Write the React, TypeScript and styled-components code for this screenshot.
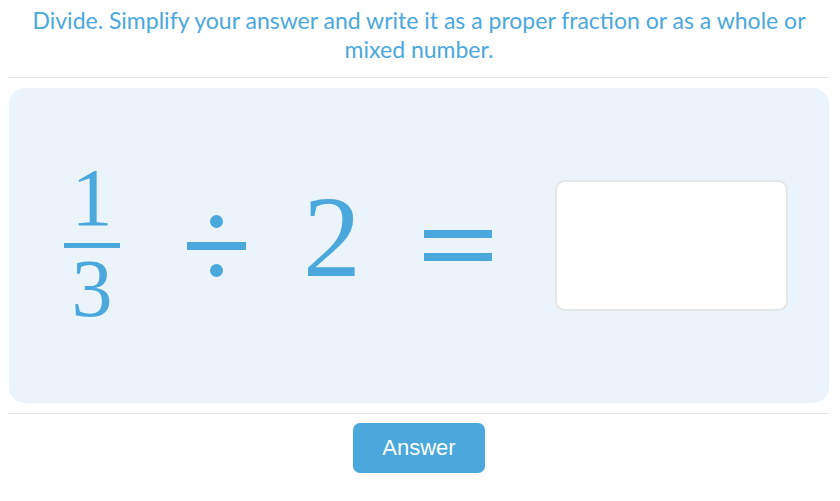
import styled, { createGlobalStyle } from 'styled-components'

const GlobalStyle = createGlobalStyle`
  html, body {
    margin: 0;
    padding: 0;
    background: #ffffff;
  }
  * {
    box-sizing: border-box;
  }
`

const blue = '#4aa8dc'

const Page = styled.div`
  width: 840px;
  padding: 0 11px 0 9px;
`

const Prompt = styled.h2`
  margin: 0;
  padding: 6px 20px 13px;
  font-family: Lato, 'Open Sans', sans-serif;
  font-weight: 400;
  font-size: 23px;
  line-height: 29px;
  color: ${blue};
  text-align: center;
`

const Rule = styled.hr`
  margin: 0;
  border: none;
  height: 1px;
  background: #e6e6e6;
`

const Panel = styled.div`
  margin: 10px 0;
  height: 315px;
  border-radius: 16px;
  background: #ebf4fa;
  display: flex;
  align-items: center;
  padding-left: 55px;
  color: ${blue};
  font-family: 'Liberation Serif', 'Times New Roman', serif;
`

const Fraction = styled.div`
  display: inline-flex;
  flex-direction: column;
  align-items: center;
  width: 56px;
  font-size: 82px;
  line-height: 1;
  position: relative;
  top: -2px;
`

const Numerator = styled.span`
  display: block;
  margin-bottom: 4px;
`

const Denominator = styled.span`
  display: block;
  margin-top: 0;
`

const Bar = styled.span`
  display: block;
  width: 56px;
  height: 5px;
  background: ${blue};
`

const Operator = styled.span<{ $gap: number }>`
  position: relative;
  display: inline-flex;
  flex-direction: column;
  align-items: center;
  justify-content: center;
  margin-left: ${(p) => p.$gap}px;
`

const OpText = styled.span`
  font-size: 1px;
  color: transparent;
  position: absolute;
  overflow: hidden;
  width: 1px;
  height: 1px;
`

const HBar = styled.span<{ $w: number }>`
  display: block;
  width: ${(p) => p.$w}px;
  height: 8px;
  background: ${blue};
`

const Dot = styled.span`
  display: block;
  width: 13px;
  height: 13px;
  border-radius: 50%;
  background: ${blue};
`

const Spacer = styled.span<{ $h: number }>`
  display: block;
  height: ${(p) => p.$h}px;
`

const Number = styled.span`
  margin-left: 57px;
  font-size: 116px;
  line-height: 1;
  position: relative;
  top: -9px;
`

const AnswerBox = styled.input`
  margin-left: 63px;
  width: 233px;
  height: 131px;
  border: 2px solid #e6e6e6;
  border-radius: 10px;
  background: #ffffff;
  outline: none;
`

const Footer = styled.div`
  display: flex;
  justify-content: center;
  padding: 9px 0 0 0;
`

const AnswerButton = styled.button`
  width: 132px;
  height: 50px;
  border: none;
  border-radius: 7px;
  background: ${blue};
  color: #ffffff;
  font-family: 'Liberation Sans', Arial, sans-serif;
  font-size: 22px;
  cursor: pointer;
`

export default function App() {
  return (
    <>
      <GlobalStyle />
      <Page>
        <Prompt>
          Divide. Simplify your answer and write it as a proper fraction or as a whole or mixed
          number.
        </Prompt>
        <Rule />
        <Panel>
          <Fraction>
            <Numerator>1</Numerator>
            <Bar />
            <Denominator>3</Denominator>
          </Fraction>
          <Operator $gap={67}>
            <OpText>÷</OpText>
            <Dot />
            <Spacer $h={14} />
            <HBar $w={59} />
            <Spacer $h={14} />
            <Dot />
          </Operator>
          <Number>2</Number>
          <Operator $gap={63}>
            <OpText>=</OpText>
            <HBar $w={68} />
            <Spacer $h={15} />
            <HBar $w={68} />
          </Operator>
          <AnswerBox aria-label="answer" />
        </Panel>
        <Rule />
        <Footer>
          <AnswerButton>Answer</AnswerButton>
        </Footer>
      </Page>
    </>
  )
}
